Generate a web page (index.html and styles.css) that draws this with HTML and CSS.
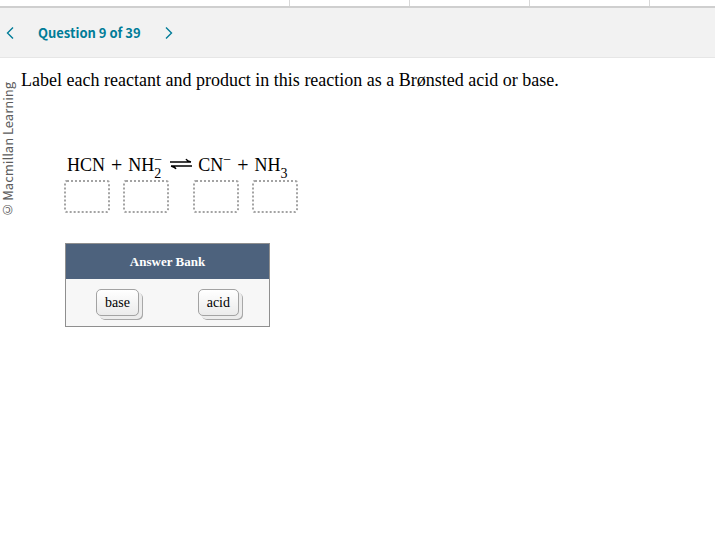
FILE: index.html
```html
<!DOCTYPE html>
<html lang="en">
<head>
    <meta charset="UTF-8">
    <meta name="viewport" content="width=device-width, initial-scale=1.0">
    <title>Question 9 of 39</title>
    <link rel="stylesheet" href="styles.css">
</head>
<body>
    <div class="tabs">
        <div class="tab-space"></div>
        <div class="tab"></div>
        <div class="tab"></div>
        <div class="tab"></div>
        <div class="tab last"></div>
    </div>

    <nav class="question-nav">
        <button type="button" class="arrow" aria-label="Previous question">
            <svg width="8" height="14" viewBox="0 0 8 14"><path d="M7 1.5 L1.5 7 L7 12.5"/></svg>
        </button>
        <h1 class="title">Question 9 of 39</h1>
        <button type="button" class="arrow" aria-label="Next question">
            <svg width="8" height="14" viewBox="0 0 8 14"><path d="M1 1.5 L6.5 7 L1 12.5"/></svg>
        </button>
    </nav>

    <main class="content">
        <div class="copyright">© Macmillan Learning</div>
        <div class="question">
            <p class="prompt">Label each reactant and product in this reaction as a Brønsted acid or base.</p>

            <div class="reaction">
                <div class="equation">
                    <span>HCN</span>
                    <span class="plus">+</span>
                    <span class="species">NH<span class="scripts"><span>−</span><span>2</span></span></span>
                    <svg class="equilibrium" width="24" height="14" viewBox="0 0 24 14">
                        <path d="M2 4 H23 M18 1 Q19 3 23 4" />
                        <path d="M24 8 H3 M8 11 Q7 9 3 8" />
                    </svg>
                    <span class="species">CN<span class="scripts"><span>−</span><span></span></span></span>
                    <span class="plus">+</span>
                    <span class="species">NH<span class="scripts"><span></span><span>3</span></span></span>
                </div>
                <div class="slots">
                    <div class="slot-pair">
                        <div class="slot"></div>
                        <div class="slot"></div>
                    </div>
                    <div class="slot-pair">
                        <div class="slot"></div>
                        <div class="slot"></div>
                    </div>
                </div>
            </div>

            <section class="bank">
                <h2 class="bank-title">Answer Bank</h2>
                <div class="bank-items">
                    <button type="button" class="token">base</button>
                    <button type="button" class="token">acid</button>
                </div>
            </section>
        </div>
    </main>
</body>
</html>
```
FILE: styles.css
```css
body {
    margin: 0;
    background-color: #fff;
    color: #000;
    font-family: "Liberation Serif", "Times New Roman", serif;
}
.tabs {
    display: flex;
    height: 6px;
    border-bottom: 2px solid #cfcfcf;
}
.tab-space {
    flex: 1;
}
.tab {
    box-sizing: border-box;
    width: 120px;
    border-left: 1px solid #d8d8d8;
}
.tab.last {
    width: 66px;
}
.question-nav {
    display: flex;
    align-items: center;
    gap: 24px;
    height: 49px;
    padding-left: 6px;
    background-color: #f2f2f2;
    border-bottom: 1px solid #e6e6e6;
}
.arrow {
    display: flex;
    padding: 0;
    border: none;
    background: none;
    cursor: pointer;
}
.arrow path {
    fill: none;
    stroke: #007c98;
    stroke-width: 1.4;
}
.title {
    margin: 0;
    color: #007c98;
    font-family: "Noto Sans CJK SC", "Noto Sans", sans-serif;
    font-size: 13px;
    font-weight: 700;
    line-height: 20px;
}
.content {
    display: flex;
    align-items: flex-start;
}
.copyright {
    box-sizing: border-box;
    width: 16px;
    margin-top: 24px;
    color: #5c5c5c;
    font-family: "Noto Sans CJK SC", "Noto Sans", sans-serif;
    font-size: 13px;
    line-height: 16px;
    white-space: nowrap;
    writing-mode: vertical-rl;
    transform: rotate(180deg);
}
.question {
    flex: 1;
    padding: 11px 5px;
}
.prompt {
    margin: 0;
    font-size: 18px;
    line-height: 22px;
}
.reaction {
    margin: 59px 0 0 43px;
}
.equation {
    display: flex;
    align-items: center;
    gap: 6px;
    height: 30px;
    padding-left: 3px;
    font-size: 18px;
}
.plus {
    font-size: 20px;
}
.species {
    display: flex;
    align-items: center;
}
.scripts {
    display: grid;
    grid-template-rows: 17px 11px;
    font-size: 14px;
    line-height: 17px;
}
.scripts span + span {
    line-height: 11px;
}
.equilibrium path {
    fill: none;
    stroke: #000;
    stroke-width: 1.3;
}
.slots {
    display: flex;
    gap: 24px;
}
.slot-pair {
    display: flex;
    gap: 13px;
}
.slot {
    box-sizing: border-box;
    width: 46px;
    height: 33px;
    border: 2px dotted #a3a3a3;
    border-radius: 3px;
}
.bank {
    box-sizing: border-box;
    width: 205px;
    margin: 30px 0 0 44px;
    border: 1px solid #8f8f8f;
    background-color: #f7f7f7;
}
.bank-title {
    margin: 0;
    background-color: #4d627d;
    color: #fff;
    font-size: 13px;
    font-weight: 600;
    line-height: 35px;
    text-align: center;
}
.bank-items {
    display: flex;
    justify-content: space-between;
    padding: 10px 30px;
}
.token {
    height: 27px;
    padding: 0 8px;
    border: 1px solid #a3a3a3;
    border-radius: 5px;
    background: linear-gradient(#fff, #ebebeb);
    box-shadow: 3px 3px 0 #ececec, 4px 4px 0 #a8a8a8;
    color: #000;
    font-family: inherit;
    font-size: 14px;
    cursor: pointer;
}
```
